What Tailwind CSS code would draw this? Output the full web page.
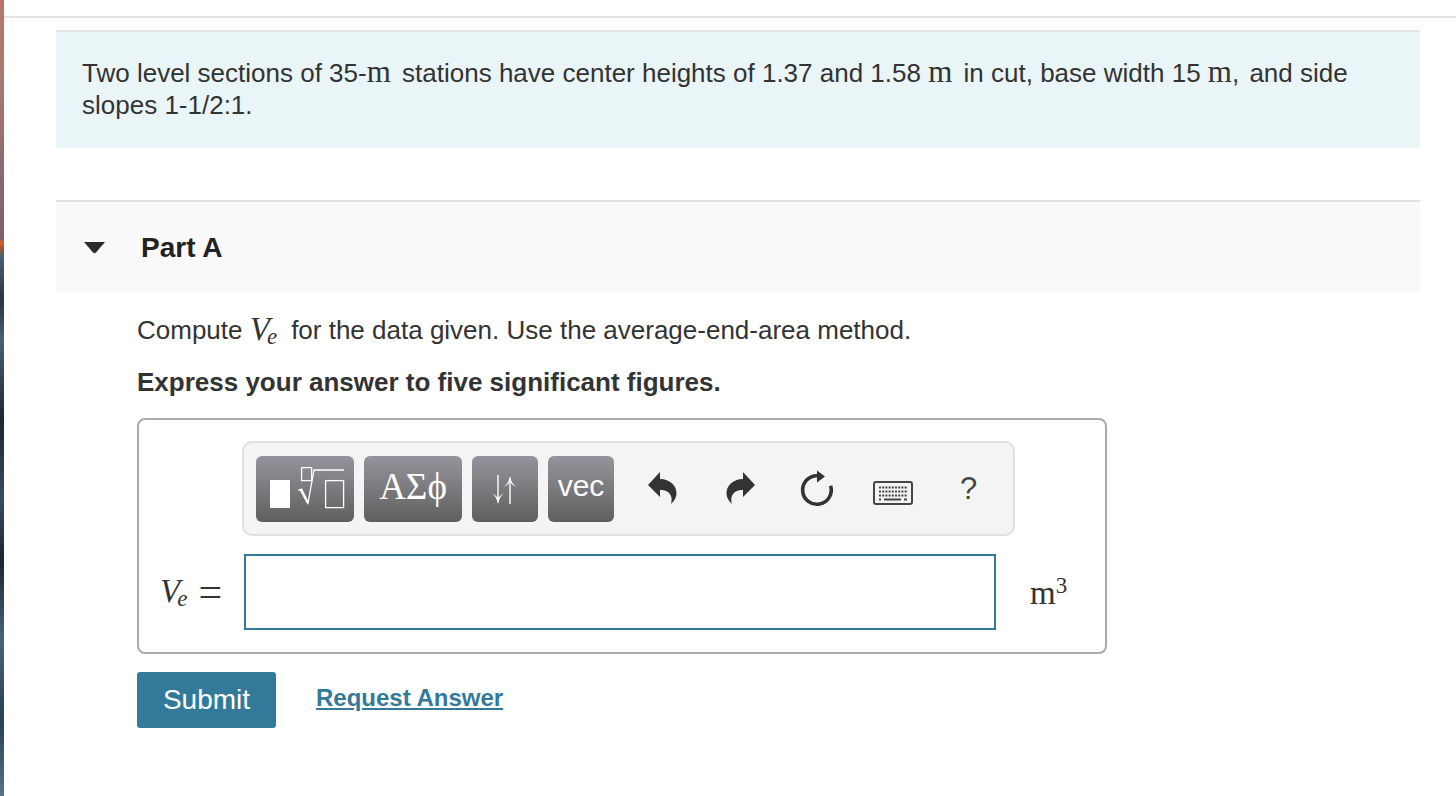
<!DOCTYPE html>
<html>
<head>
<meta charset="utf-8">
<script src="https://cdn.jsdelivr.net/npm/@tailwindcss/browser@4"></script>
</head>
<body class="bg-white overflow-hidden">
<div class="flex h-[796px] w-[1456px] font-['Liberation_Sans',sans-serif] text-[#333]">
  <div class="w-[4px] shrink-0 h-full bg-[linear-gradient(to_bottom,#b5776a_0px,#a87a70_80px,#8d6a72_170px,#7d5f6c_238px,#d8602c_243px,#a8502c_248px,#4c5f72_256px,#2a3442_300px,#4c6072_340px,#1c2632_420px,#3a4c5e_500px,#1c2632_560px,#4a6278_640px,#2c3e50_720px,#55738c_796px)]"></div>
  <div class="flex-1 min-w-0">
    <div class="h-[18px] border-b-2 border-[#e3e3e3]"></div>
    <div class="ml-[52px] w-[1364px] mt-[12px] h-[118px] border-t-2 border-[#e2e6e7] bg-[#eaf5f8] pl-[26px] pr-[60px] pt-[24px] text-[26px] leading-[32px]">
      Two level sections of 35-<span class="font-['Liberation_Serif',serif] text-[31px] leading-none mr-[4px]">m</span> stations have center heights of 1.37 and 1.58 <span class="font-['Liberation_Serif',serif] text-[31px] leading-none mr-[4px]">m</span> in cut, base width 15 <span class="font-['Liberation_Serif',serif] text-[31px] leading-none">m</span><span class="mr-[3px]">,</span> and side slopes 1-1/2:1.
    </div>
    <div class="ml-[52px] w-[1364px] mt-[52px] h-[93px] border-t-2 border-[#e0e0e0] bg-[#f9f9f9] flex items-center">
      <svg class="ml-[28px] mt-[1px] w-[21px] h-[12px]" viewBox="0 0 21 12"><path d="M0 0H21L12 10.5Q10.5 12 9 10.5Z" fill="#2b2b2b"/></svg>
      <div class="ml-[36px] mt-[1px] text-[28px] font-bold text-[#222]">Part A</div>
    </div>
    <div class="ml-[133px] w-[970px]">
      <div class="mt-[19px] h-[36px] flex items-center text-[26px] whitespace-pre">Compute <span class="font-['Liberation_Serif',serif] italic text-[33px] leading-none">V<span class="text-[23px] align-[-4px] ml-[-3px]">e</span></span><span class="ml-[14px]">for the data given. Use the average-end-area method.</span></div>
      <div class="mt-[16px] h-[36px] flex items-center text-[26px] font-bold">Express your answer to five significant figures.</div>
      <div class="mt-[18px] h-[236px] border-2 border-[#aaaaaa] rounded-[8px] bg-white">
        <div class="ml-[103px] mt-[21px] w-[773px] h-[95px] border-2 border-[#e0e0e0] rounded-[10px] bg-[#f4f4f4] flex items-center pl-[12px] pt-[1px]">
          <div class="w-[98px] h-[66px] rounded-[6px] bg-[linear-gradient(to_bottom,#96949c,#5f5f5f)]">
            <svg class="w-[98px] h-[66px]" viewBox="0 0 98 66" fill="none" stroke="#fff" stroke-width="1.3"><rect x="14" y="24" width="20" height="28" fill="#fff" stroke="none"/><rect x="45.6" y="11.6" width="10" height="13"/><path d="M42 34.5l3.5-1.5 6.5 14 6-33h30"/><path d="M44.5 33l7.5 14" stroke-width="2.6"/><rect x="69.6" y="24.6" width="18" height="27"/></svg>
          </div>
          <div class="ml-[10px] w-[98px] h-[66px] rounded-[6px] bg-[linear-gradient(to_bottom,#96949c,#5f5f5f)] flex items-center justify-center text-white font-['Liberation_Serif',serif] text-[37px] pb-[5px]">ΑΣϕ</div>
          <div class="ml-[10px] w-[66px] h-[66px] rounded-[6px] bg-[linear-gradient(to_bottom,#96949c,#5f5f5f)]">
            <svg class="w-[66px] h-[66px]" viewBox="0 0 66 66" fill="none" stroke="#fff" stroke-width="1.4"><path d="M26 19V46"/><path d="M19.5 37Q24.5 40 26 48Q27.5 40 32.5 37Q28 39 26 42Q24 39 19.5 37Z" fill="#fff" stroke="none"/><path d="M38 48V22"/><path d="M31.5 31Q36.5 28 38 20Q39.5 28 44.5 31Q40 29 38 26Q36 29 31.5 31Z" fill="#fff" stroke="none"/></svg>
          </div>
          <div class="ml-[10px] w-[66px] h-[66px] rounded-[6px] bg-[linear-gradient(to_bottom,#96949c,#5f5f5f)] flex items-center justify-center text-white text-[30px] pb-[8px]">vec</div>
          <svg class="ml-[34px] mb-[3px] w-[29px] h-[32px]" viewBox="0 0 29 32"><path d="M0 13L12 0V7C22 7 29 14 28.5 22C28 27 25 30 23 32C25 26 23 18 12 18V25Z" fill="#333"/></svg>
          <svg class="ml-[49px] mb-[3px] w-[29px] h-[32px]" viewBox="0 0 29 32"><path d="M29 13L17 0V7C7 7 0 14 .5 22C1 27 4 30 6 32C4 26 6 18 17 18V25Z" fill="#333"/></svg>
          <svg class="ml-[44px] mb-[2px] w-[36px] h-[40px]" viewBox="0 0 36 40" fill="none"><path d="M18.5 7.7A14.3 14.3 0 1 0 31.6 17.7" stroke="#333" stroke-width="3.6"/><path d="M18 2.5L26 8.5L18 14.5Z" fill="#333"/></svg>
          <svg class="ml-[38px] mt-[8px] w-[40px] h-[24px]" viewBox="0 0 40 24"><rect x="1" y="1" width="38" height="22" rx="2" fill="#f4f4f4" stroke="#444" stroke-width="2"/><path d="M6 6.5H35M6 10.5H35M6 14.5H34" stroke="#444" stroke-width="2" stroke-dasharray="2 1.2"/><path d="M6 18.5H8M11 18.5H28M31 18.5H34" stroke="#444" stroke-width="2"/></svg>
          <div class="ml-[47px] mb-[2px] text-[31px] text-[#444] leading-none">?</div>
        </div>
        <div class="mt-[18px] flex items-center h-[76px]">
          <div class="w-[105px] pl-[21px] flex items-center font-['Liberation_Serif',serif] text-[33px] italic leading-none"><span>V<span class="text-[23px] align-[-4px] ml-[-3px]">e</span></span><span class="ml-[11px] text-[42px] not-italic leading-none">=</span></div>
          <div class="w-[752px] h-[76px] border-2 border-[#337a9a] bg-white"></div>
          <div class="ml-[34px] font-['Liberation_Serif',serif] text-[33px] leading-none">m<span class="text-[23px] align-[11px]">3</span></div>
        </div>
      </div>
      <div class="mt-[18px] flex items-center">
        <div class="w-[139px] h-[56px] rounded-[3px] bg-[#337a9a] text-white text-[28px] flex items-center justify-center">Submit</div>
        <div class="ml-[40px] mb-[4px] text-[24px] font-bold text-[#337a9a] underline">Request Answer</div>
      </div>
    </div>
  </div>
</div>
</body>
</html>
